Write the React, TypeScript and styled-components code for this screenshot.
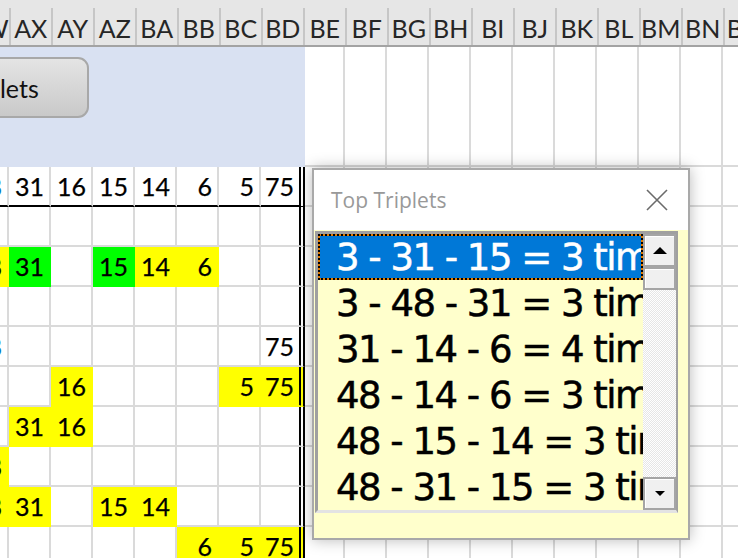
import styled, { createGlobalStyle } from "styled-components";

const GlobalStyle = createGlobalStyle`
  html, body {
    margin: 0;
    padding: 0;
    background: #fff;
    overflow: hidden;
  }
`;

const YELLOW = "#ffff00";
const GREEN = "#00ff00";
const BAND = "#d9e1f2";
const GRID = "#dadada";

const COLS = ["AW", "AX", "AY", "AZ", "BA", "BB", "BC", "BD", "BE", "BF", "BG", "BH", "BI", "BJ", "BK", "BL", "BM", "BN", "BO"];
const BODY_W = COLS.map((c) => (c === "BD" ? 44 : c === "BE" ? 40 : 42));

type Spec = { v?: string; bg?: string; blue?: boolean };
type RowSpec = { cells: Record<number, Spec>; rule?: boolean };

const rows: RowSpec[] = [
  {
    rule: true,
    cells: {
      0: { v: "48", blue: true },
      1: { v: "31" },
      2: { v: "16" },
      3: { v: "15" },
      4: { v: "14" },
      5: { v: "6" },
      6: { v: "5" },
      7: { v: "75" },
    },
  },
  { cells: {} },
  {
    cells: {
      0: { v: "48", bg: YELLOW },
      1: { v: "31", bg: GREEN },
      3: { v: "15", bg: GREEN },
      4: { v: "14", bg: YELLOW },
      5: { v: "6", bg: YELLOW },
    },
  },
  { cells: {} },
  { cells: { 0: { v: "48", blue: true }, 7: { v: "75" } } },
  { cells: { 2: { v: "16", bg: YELLOW }, 6: { v: "5", bg: YELLOW }, 7: { v: "75", bg: YELLOW } } },
  { cells: { 1: { v: "31", bg: YELLOW }, 2: { v: "16", bg: YELLOW } } },
  { cells: { 0: { v: "48", bg: YELLOW } } },
  {
    cells: {
      0: { v: "48", bg: YELLOW },
      1: { v: "31", bg: YELLOW },
      3: { v: "15", bg: YELLOW },
      4: { v: "14", bg: YELLOW },
    },
  },
  { cells: { 5: { v: "6", bg: YELLOW }, 6: { v: "5", bg: YELLOW }, 7: { v: "75", bg: YELLOW } } },
];

const triplets = [
  "3 - 31 - 15 = 3 times",
  "3 - 48 - 31 = 3 times",
  "31 - 14 - 6 = 4 times",
  "48 - 14 - 6 = 3 times",
  "48 - 15 - 14 = 3 times",
  "48 - 31 - 15 = 3 times",
];

const Screen = styled.div`
  position: relative;
  width: 738px;
  height: 558px;
  overflow: hidden;
  background: #fff;
  font-family: Lato, "Liberation Sans", sans-serif;
`;

const Sheet = styled.div`
  width: 800px;
  margin-left: -33px;
  display: flex;
  flex-direction: column;
`;

const HeaderRow = styled.div`
  display: flex;
  height: 47px;
  padding-top: 8px;
  box-sizing: border-box;
  background: #e6e6e6;
  border-bottom: 2px solid #a3a3a3;
`;

const ColHead = styled.div`
  flex: 0 0 42px;
  box-sizing: border-box;
  padding-top: 3px;
  border-right: 2px solid #c6c6c6;
  display: flex;
  align-items: center;
  justify-content: center;
  font-size: 25px;
  color: #262626;
`;

const Row = styled.div<{ $h: number }>`
  display: flex;
  height: ${(p) => p.$h}px;
`;

const Cell = styled.div<{ $w: number; $bg?: string; $ink?: string; $rule?: boolean; $double?: boolean }>`
  flex: 0 0 ${(p) => p.$w}px;
  box-sizing: border-box;
  background: ${(p) => p.$bg ?? "#fff"};
  border-right: ${(p) => (p.$double ? "6px double #000" : `2px solid ${p.$bg ?? GRID}`)};
  border-bottom: 2px solid ${(p) => (p.$rule ? "#000" : p.$bg ?? GRID)};
  padding-right: 5px;
  display: flex;
  align-items: center;
  justify-content: flex-end;
  font-size: 25px;
  -webkit-text-stroke: 0.25px ${(p) => p.$ink ?? "#000"};
  color: ${(p) => p.$ink ?? "#000"};
`;

const ShapeButton = styled.div`
  position: absolute;
  left: -137px;
  top: 57px;
  width: 226px;
  height: 61px;
  box-sizing: border-box;
  border: 2px solid #a8a8a8;
  border-radius: 11px;
  background: linear-gradient(#e4e4e4, #c9c9c9);
  display: flex;
  align-items: center;
  justify-content: center;
  font-size: 25px;
  color: #111;
`;

const Dialog = styled.div`
  position: absolute;
  left: 312px;
  top: 168px;
  width: 378px;
  height: 372px;
  box-sizing: border-box;
  border: 2px solid #a9a9a9;
  background: #ffffcc;
  box-shadow: 0 0 14px rgba(0, 0, 0, 0.28);
  display: flex;
  flex-direction: column;
`;

const TitleBar = styled.div`
  flex: 0 0 60px;
  background: #fff;
  display: flex;
  align-items: center;
  justify-content: space-between;
  padding: 0 20px 0 17px;
  font-family: "Open Sans", "Noto Sans", sans-serif;
  font-size: 21px;
  color: #999;
`;

const Client = styled.div`
  flex: 1;
  padding: 1px 0 0 1px;
`;

const ListBox = styled.div`
  width: 363px;
  height: 282px;
  box-sizing: border-box;
  border-style: solid;
  border-width: 3px 2px 3px 3px;
  border-color: #a0a0a0 #a0a0a0 #e3e3e3 #a0a0a0;
  background: #ffffcc;
  display: flex;
`;

const Items = styled.div`
  flex: 1;
  overflow: hidden;
  display: flex;
  flex-direction: column;
`;

const Item = styled.div<{ $sel?: boolean }>`
  flex: 0 0 46px;
  box-sizing: border-box;
  padding-left: 18px;
  white-space: nowrap;
  overflow: hidden;
  display: flex;
  align-items: center;
  font-family: "DejaVu Sans", Verdana, sans-serif;
  font-size: 37px;
  letter-spacing: -1.5px;
  color: ${(p) => (p.$sel ? "#fff" : "#000")};
  -webkit-text-stroke: 0.5px ${(p) => (p.$sel ? "#fff" : "#000")};
  ${(p) =>
    p.$sel
      ? `border: 2px dotted #000;
         padding-left: 16px;
         background: linear-gradient(#0078d7, #0078d7) padding-box, #e07b00 border-box;`
      : ""}
`;

const ScrollBar = styled.div`
  flex: 0 0 33px;
  display: flex;
  flex-direction: column;
  background: repeating-conic-gradient(#ffffff 0 25%, #e6e6e6 0 50%) 0 0 / 2px 2px;
`;

const ScrollBtn = styled.div<{ $h: number }>`
  flex: 0 0 ${(p) => p.$h}px;
  box-sizing: border-box;
  border: 2px solid #a5a5a5;
  box-shadow: inset 1px 1px #ffffff;
  background: #f0f0f0;
  display: flex;
  align-items: center;
  justify-content: center;
`;

const Track = styled.div`
  flex: 1;
`;

function CloseIcon() {
  return (
    <svg width="22" height="22" viewBox="0 0 22 22">
      <path d="M1 1 L21 21 M21 1 L1 21" stroke="#6b6b6b" strokeWidth="1.6" />
    </svg>
  );
}

function Arrow({ up, w, h }: { up?: boolean; w: number; h: number }) {
  return (
    <svg width={w} height={h} viewBox={`0 0 ${w} ${h}`}>
      <polygon points={up ? `0,${h} ${w},${h} ${w / 2},0` : `0,0 ${w},0 ${w / 2},${h}`} fill="#000" />
    </svg>
  );
}

export default function App() {
  return (
    <>
      <GlobalStyle />
      <Screen>
        <Sheet>
          <HeaderRow>
            {COLS.map((c) => (
              <ColHead key={c}>{c}</ColHead>
            ))}
          </HeaderRow>
          <Row $h={120}>
            {COLS.map((c, i) => (
              <Cell key={c} $w={BODY_W[i]} $bg={i < 8 ? BAND : undefined} />
            ))}
          </Row>
          {rows.map((r, ri) => (
            <Row key={ri} $h={40}>
              {COLS.map((c, i) => {
                const s = r.cells[i];
                return (
                  <Cell
                    key={c}
                    $w={BODY_W[i]}
                    $bg={s?.bg}
                    $ink={s?.blue ? "#0070c0" : undefined}
                    $rule={r.rule && i < 8}
                    $double={i === 7}
                  >
                    {s?.v}
                  </Cell>
                );
              })}
            </Row>
          ))}
        </Sheet>

        <ShapeButton>Top Triplets</ShapeButton>

        <Dialog>
          <TitleBar>
            <span>Top Triplets</span>
            <CloseIcon />
          </TitleBar>
          <Client>
            <ListBox>
              <Items>
                {triplets.map((t, i) => (
                  <Item key={t} $sel={i === 0}>
                    {t}
                  </Item>
                ))}
              </Items>
              <ScrollBar>
                <ScrollBtn $h={33}>
                  <Arrow up w={14} h={7} />
                </ScrollBtn>
                <ScrollBtn $h={23} />
                <Track />
                <ScrollBtn $h={33}>
                  <Arrow w={10} h={5} />
                </ScrollBtn>
              </ScrollBar>
            </ListBox>
          </Client>
        </Dialog>
      </Screen>
    </>
  );
}
